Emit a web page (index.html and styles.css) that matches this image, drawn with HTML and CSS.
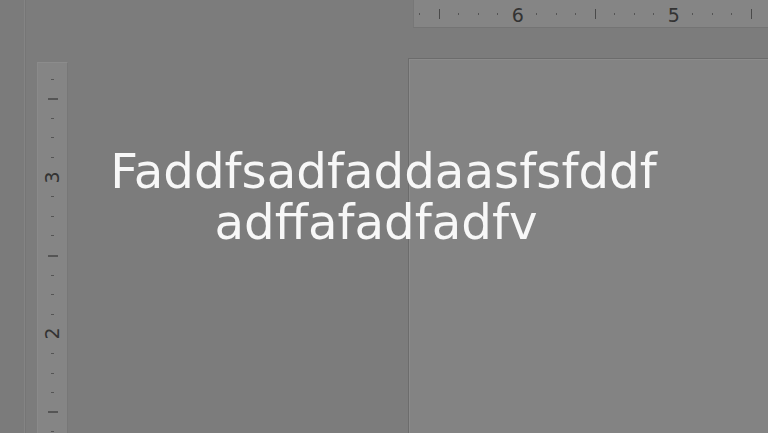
FILE: index.html
```html
<!DOCTYPE html>
<html>
<head>
<meta charset="utf-8">
<link rel="stylesheet" href="styles.css">
</head>
<body>
<div class="app">
  <div class="side"></div>
  <div class="main">
    <div class="top">
      <div class="hruler">
        <div class="hticks">
          <span class="cell"><i class="dot"></i></span>
          <span class="cell"><i class="major"></i></span>
          <span class="cell"><i class="dot"></i></span>
          <span class="cell"><i class="dot"></i></span>
          <span class="cell"><i class="dot"></i></span>
          <span class="cell"><b class="num">6</b></span>
          <span class="cell"><i class="dot"></i></span>
          <span class="cell"><i class="dot"></i></span>
          <span class="cell"><i class="dot"></i></span>
          <span class="cell"><i class="major"></i></span>
          <span class="cell"><i class="dot"></i></span>
          <span class="cell"><i class="dot"></i></span>
          <span class="cell"><i class="dot"></i></span>
          <span class="cell"><b class="num">5</b></span>
          <span class="cell"><i class="dot"></i></span>
          <span class="cell"><i class="dot"></i></span>
          <span class="cell"><i class="dot"></i></span>
          <span class="cell"><i class="major"></i></span>
          <span class="cell"><i class="dot"></i></span>
        </div>
      </div>
    </div>
    <div class="work">
      <div class="vruler">
        <div class="vticks">
          <span class="vcell"><i class="vdot"></i></span>
          <span class="vcell"><i class="vmajor"></i></span>
          <span class="vcell"><i class="vdot"></i></span>
          <span class="vcell"><i class="vdot"></i></span>
          <span class="vcell"><i class="vdot"></i></span>
          <span class="vcell"><b class="vnum">3</b></span>
          <span class="vcell"><i class="vdot"></i></span>
          <span class="vcell"><i class="vdot"></i></span>
          <span class="vcell"><i class="vdot"></i></span>
          <span class="vcell"><i class="vmajor"></i></span>
          <span class="vcell"><i class="vdot"></i></span>
          <span class="vcell"><i class="vdot"></i></span>
          <span class="vcell"><i class="vdot"></i></span>
          <span class="vcell"><b class="vnum">2</b></span>
          <span class="vcell"><i class="vdot"></i></span>
          <span class="vcell"><i class="vdot"></i></span>
          <span class="vcell"><i class="vdot"></i></span>
          <span class="vcell"><i class="vmajor"></i></span>
          <span class="vcell"><i class="vdot"></i></span>
        </div>
      </div>
      <div class="page"></div>
    </div>
  </div>
</div>
<div class="overlay">
  <div class="line line1">Faddfsadfaddaasfsfddf</div>
  <div class="line line2">adffafadfadfv</div>
</div>
</body>
</html>
```
FILE: styles.css
```css
html, body {
  margin: 0;
  padding: 0;
}
body {
  width: 768px;
  height: 433px;
  overflow: hidden;
  background: #7c7c7c;
  position: relative;
  font-family: "DejaVu Sans", sans-serif;
}
.app {
  display: flex;
  width: 768px;
  height: 433px;
}
.side {
  width: 24px;
  flex: none;
  background: #7b7b7b;
  border-right: 1px solid #848484;
  box-shadow: 1px 0 0 #767676;
}
.main {
  flex: 1;
  display: flex;
  flex-direction: column;
  min-width: 0;
}
.top {
  height: 58px;
  flex: none;
}
.hruler {
  margin-left: 388px;
  height: 28px;
  background: #858585;
  border-left: 1px solid #777;
  border-bottom: 1px solid #747474;
  box-sizing: border-box;
  overflow: hidden;
}
.hticks {
  display: flex;
  margin-left: -4px;
  height: 27px;
  align-items: center;
}
.cell {
  flex: none;
  width: 19.5px;
  height: 27px;
  display: flex;
  align-items: center;
  justify-content: center;
}
.dot {
  display: block;
  width: 1px;
  height: 2px;
  background: #555;
}
.major {
  display: block;
  width: 1px;
  height: 10px;
  background: #4a4a4a;
}
.num {
  font-weight: normal;
  font-size: 19px;
  color: #333;
  line-height: 1;
  margin-left: 1px;
  margin-top: 3px;
}
.work {
  flex: 1;
  display: flex;
  min-height: 0;
}
.vruler {
  margin-left: 12px;
  margin-top: 4px;
  width: 31px;
  background: #858585;
  border-left: 1px solid #8a8a8a;
  border-right: 1px solid #777;
  border-top: 1px solid #8c8c8c;
  box-sizing: border-box;
  overflow: hidden;
  flex: none;
}
.vticks {
  display: flex;
  flex-direction: column;
  padding-top: 6.4px;
}
.vcell {
  flex: none;
  height: 19.6px;
  display: flex;
  align-items: center;
  justify-content: center;
}
.vdot {
  display: block;
  width: 3px;
  height: 1px;
  background: #555;
}
.vmajor {
  display: block;
  width: 10px;
  height: 2px;
  background: #555;
}
.vnum {
  font-weight: normal;
  font-size: 19px;
  line-height: 1;
  color: #333;
  transform: rotate(-90deg);
}
.page {
  margin-left: 340px;
  flex: 1;
  background: #838383;
  border-top: 1px solid #6c6c6c;
  border-left: 1px solid #6c6c6c;
  box-shadow: inset 1px 1px 0 #8b8b8b;
}
.overlay {
  position: absolute;
  left: 0;
  top: 146px;
  width: 762px;
  text-align: center;
  color: #f7f7f7;
  font-size: 48.3px;
  line-height: 51px;
}
.line1 {
  padding-left: 5px;
}
.line2 {
  padding-right: 10px;
}
```
